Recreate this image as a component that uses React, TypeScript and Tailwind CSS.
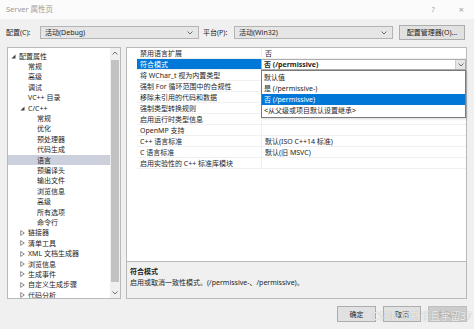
import React from 'react';

type TreeItem = { t: string; lvl: number; icon?: 'open' | 'closed'; sel?: boolean };

const tree: TreeItem[] = [
  { t: '配置属性', lvl: 0, icon: 'open' },
  { t: '常规', lvl: 1 },
  { t: '高级', lvl: 1 },
  { t: '调试', lvl: 1 },
  { t: 'VC++ 目录', lvl: 1 },
  { t: 'C/C++', lvl: 1, icon: 'open' },
  { t: '常规', lvl: 2 },
  { t: '优化', lvl: 2 },
  { t: '预处理器', lvl: 2 },
  { t: '代码生成', lvl: 2 },
  { t: '语言', lvl: 2, sel: true },
  { t: '预编译头', lvl: 2 },
  { t: '输出文件', lvl: 2 },
  { t: '浏览信息', lvl: 2 },
  { t: '高级', lvl: 2 },
  { t: '所有选项', lvl: 2 },
  { t: '命令行', lvl: 2 },
  { t: '链接器', lvl: 1, icon: 'closed' },
  { t: '清单工具', lvl: 1, icon: 'closed' },
  { t: 'XML 文档生成器', lvl: 1, icon: 'closed' },
  { t: '浏览信息', lvl: 1, icon: 'closed' },
  { t: '生成事件', lvl: 1, icon: 'closed' },
  { t: '自定义生成步骤', lvl: 1, icon: 'closed' },
  { t: '代码分析', lvl: 1, icon: 'closed' },
];

const props: { name: string; value: string }[] = [
  { name: '禁用语言扩展', value: '否' },
  { name: '符合模式', value: '否 (/permissive)' },
  { name: '将 WChar_t 视为内置类型', value: '' },
  { name: '强制 For 循环范围中的合规性', value: '' },
  { name: '移除未引用的代码和数据', value: '' },
  { name: '强制类型转换规则', value: '' },
  { name: '启用运行时类型信息', value: '' },
  { name: 'OpenMP 支持', value: '' },
  { name: 'C++ 语言标准', value: '默认(ISO C++14 标准)' },
  { name: 'C 语言标准', value: '默认(旧 MSVC)' },
  { name: '启用实验性的 C++ 标准库模块', value: '' },
];

const options = ['默认值', '是 (/permissive-)', '否 (/permissive)', '<从父级或项目默认设置继承>'];

function Chevron({ up = false }: { up?: boolean }) {
  return (
    <svg width="6" height="4" viewBox="0 0 6 4" className="shrink-0">
      <polyline
        points={up ? '0.5,3.5 3,1 5.5,3.5' : '0.5,0.5 3,3 5.5,0.5'}
        fill="none"
        stroke="#606060"
        strokeWidth="0.9"
      />
    </svg>
  );
}

function Arrow({ kind }: { kind: 'open' | 'closed' }) {
  if (kind === 'open') {
    return (
      <svg width="5" height="5" viewBox="0 0 5 5">
        <polygon points="4.5,0.5 4.5,4.5 0.5,4.5" fill="#404040" />
      </svg>
    );
  }
  return (
    <svg width="5" height="6" viewBox="0 0 5 6">
      <polygon points="0.7,0.6 4.3,3 0.7,5.4" fill="none" stroke="#707070" strokeWidth="0.8" />
    </svg>
  );
}

export default function App() {
  return (
    <div className="relative w-[474px] h-[329px] overflow-hidden bg-[#f0f0f0] text-[7px] leading-none text-[#1e1e1e] font-['Noto_Sans','Noto_Sans_CJK_SC',sans-serif]">
      {/* title bar */}
      <div className="flex items-center h-[19px] bg-[#fbfbfb] pl-[6px] pr-[10px]">
        <span className="text-[7.5px] text-[#9a9a9a]">Server 属性页</span>
        <span className="ml-auto text-[7.5px] text-[#a0a0a0]">?</span>
        <span className="ml-[24px] text-[9px] text-[#a0a0a0]">×</span>
      </div>

      {/* toolbar */}
      <div className="flex items-center h-[15px] mt-[6px] pl-[6px]">
        <span className="w-[34px]">配置(C):</span>
        <div className="flex items-center w-[159px] h-[13px] border border-[#b4b4b4] bg-[#e6e6e6] pl-[4px] pr-[5px]">
          <span>活动(Debug)</span>
          <span className="ml-auto"><Chevron /></span>
        </div>
        <span className="ml-[4px] w-[31px]">平台(P):</span>
        <div className="flex items-center w-[159px] h-[13px] border border-[#b4b4b4] bg-[#e6e6e6] pl-[4px] pr-[5px]">
          <span>活动(Win32)</span>
          <span className="ml-auto"><Chevron /></span>
        </div>
        <div className="ml-[6px] flex items-center justify-center w-[66px] h-[15px] border border-[#adadad] bg-[#e1e1e1]">
          配置管理器(O)...
        </div>
      </div>

      {/* main */}
      <div className="flex mt-[7px] pl-[7px]">
        {/* tree */}
        <div className="flex w-[114px] h-[252px] border border-[#b9b9b9] bg-white">
          <div className="flex-1 overflow-hidden pt-[3px]">
            {tree.map((it, i) => (
              <div
                key={i}
                className={`flex items-center h-[10.4px] ${it.sel ? 'bg-[#ccd0dc]' : ''} ${
                  it.lvl === 0 ? 'pl-[3px]' : it.lvl === 1 ? 'pl-[12px]' : 'pl-[21px]'
                }`}
              >
                <span className="w-[8px] flex items-center">{it.icon && <Arrow kind={it.icon} />}</span>
                <span className="whitespace-nowrap">{it.t}</span>
              </div>
            ))}
          </div>
          <div className="flex flex-col items-center w-[10px] bg-[#f0f0f0]">
            <div className="h-[10px] flex items-center"><Chevron up /></div>
            <div className="w-[8px] h-[222px] bg-[#c2c2c2] mt-[2px]" />
            <div className="mt-auto h-[10px] flex items-center"><Chevron /></div>
          </div>
        </div>

        {/* right */}
        <div className="ml-[5px] w-[341px] flex flex-col">
          <div className="relative h-[215px] border border-[#b9b9b9] bg-white">
            {props.map((p, i) => (
              <div key={i} className="flex h-[11px]">
                <div className="w-[10px]" />
                <div
                  className={`w-[124px] flex items-center pl-[3px] whitespace-nowrap border-b border-[#f0f0f0] ${
                    i === 1 ? 'bg-[#0078d7] text-white' : ''
                  }`}
                >
                  {p.name}
                </div>
                {i === 1 ? (
                  <div className="flex-1 flex items-center border border-[#adadad] pl-[2px] font-bold">
                    <span>{p.value}</span>
                    <div className="ml-auto w-[10px] h-full flex items-center justify-center bg-[#e5e5e5] border-l border-[#cfcfcf]">
                      <Chevron />
                    </div>
                  </div>
                ) : (
                  <div className="flex-1 flex items-center pl-[3px] whitespace-nowrap border-b border-l border-[#f0f0f0]">
                    {p.value}
                  </div>
                )}
              </div>
            ))}
            {/* dropdown list */}
            <div className="absolute left-[134px] top-[22px] w-[205px] h-[48px] border border-[#7a7a7a] bg-white pt-[1px] shadow-[1px_1px_2px_rgba(0,0,0,0.15)]">
              {options.map((o, i) => (
                <div
                  key={i}
                  className={`flex items-center h-[11px] pl-[2px] whitespace-nowrap ${
                    i === 2 ? 'bg-[#0078d7] text-white' : ''
                  }`}
                >
                  {o}
                </div>
              ))}
            </div>
          </div>
          <div className="h-[37px] border border-t-0 border-[#b9b9b9] bg-[#f0f0f0] pl-[3px] pt-[4px]">
            <div className="font-bold h-[10px] flex items-center">符合模式</div>
            <div className="h-[12px] flex items-center">启用或取消一致性模式。(/permissive-、/permissive)。</div>
          </div>
        </div>
      </div>

      {/* buttons */}
      <div className="flex justify-end gap-[7px] mt-[7px] pr-[7px]">
        <div className="flex items-center justify-center w-[39px] h-[16px] border border-[#adadad] bg-[#e1e1e1]">确定</div>
        <div className="flex items-center justify-center w-[38px] h-[16px] border border-[#adadad] bg-[#e1e1e1]">取消</div>
        <div className="flex items-center justify-center w-[39px] h-[16px] border border-[#bfbfbf] bg-[#cccccc] text-[#9a9a9a]">应用(A)</div>
      </div>

      {/* watermark */}
      <div className="absolute left-[372px] top-[311px] text-[10px] text-white/80 [text-shadow:0_0_1px_#9a9a9a] whitespace-nowrap">
        CSDN @新手且学留37
      </div>
    </div>
  );
}
